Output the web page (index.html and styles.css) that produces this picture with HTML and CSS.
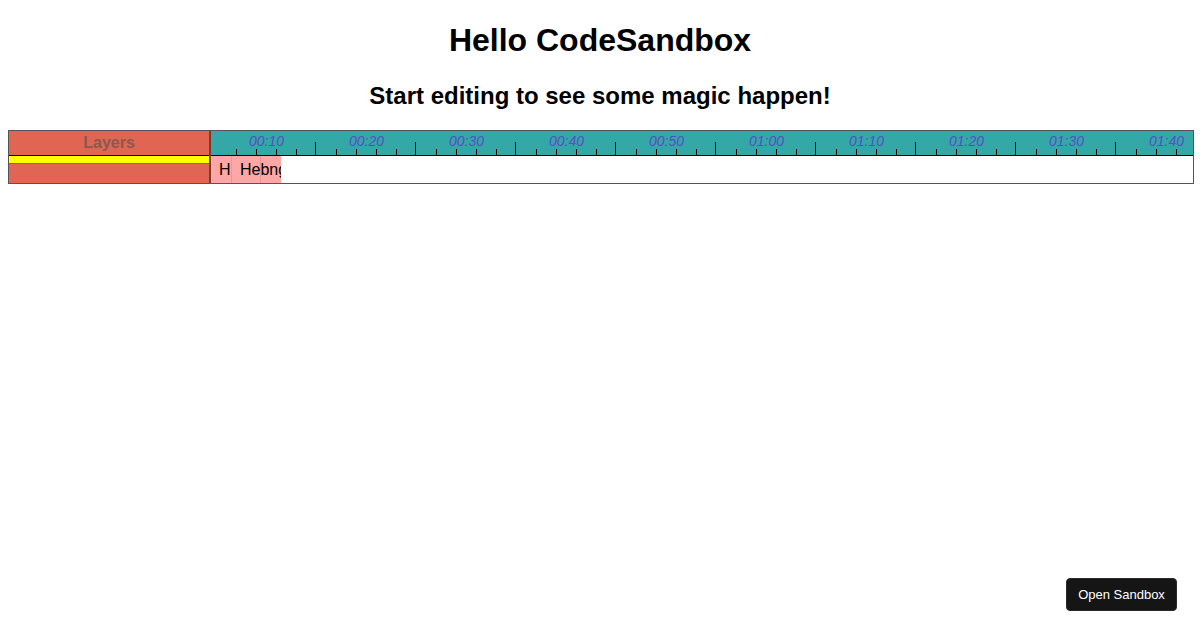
FILE: index.html
```html
<!DOCTYPE html>
<html>
<head>
<meta charset="utf-8">
<link rel="stylesheet" href="styles.css">
</head>
<body>
<div class="app">
  <h1>Hello CodeSandbox</h1>
  <h2>Start editing to see some magic happen!</h2>
  <div class="timeline">
    <div class="layers">
      <div class="layers-head">Layers</div>
      <div class="layer-bar"></div>
      <div class="layer-rest"></div>
    </div>
    <div class="tracks">
      <div class="ruler">
        <div class="seg"><span class="lbl">00:10</span><div class="ticks"><i class="major"></i><i></i><i></i><i></i><i></i></div></div>
        <div class="seg"><span class="lbl">00:20</span><div class="ticks"><i class="major"></i><i></i><i></i><i></i><i></i></div></div>
        <div class="seg"><span class="lbl">00:30</span><div class="ticks"><i class="major"></i><i></i><i></i><i></i><i></i></div></div>
        <div class="seg"><span class="lbl">00:40</span><div class="ticks"><i class="major"></i><i></i><i></i><i></i><i></i></div></div>
        <div class="seg"><span class="lbl">00:50</span><div class="ticks"><i class="major"></i><i></i><i></i><i></i><i></i></div></div>
        <div class="seg"><span class="lbl">01:00</span><div class="ticks"><i class="major"></i><i></i><i></i><i></i><i></i></div></div>
        <div class="seg"><span class="lbl">01:10</span><div class="ticks"><i class="major"></i><i></i><i></i><i></i><i></i></div></div>
        <div class="seg"><span class="lbl">01:20</span><div class="ticks"><i class="major"></i><i></i><i></i><i></i><i></i></div></div>
        <div class="seg"><span class="lbl">01:30</span><div class="ticks"><i class="major"></i><i></i><i></i><i></i><i></i></div></div>
        <div class="seg"><span class="lbl">01:40</span><div class="ticks"><i class="major"></i><i></i><i></i><i></i><i></i></div></div>
      </div>
      <div class="track">
        <div class="clips">
          <div class="clip c1">H</div>
          <div class="clip c2">Hebng</div>
          <div class="clip c3"></div>
        </div>
      </div>
    </div>
  </div>
</div>
<a class="open-btn">Open Sandbox</a>
</body>
</html>
```

FILE: styles.css
```css
*, *::before, *::after {
  box-sizing: content-box;
}
html, body {
  margin: 0;
  padding: 0;
  background: #fff;
}
body {
  font-family: "Liberation Sans", Arial, sans-serif;
  color: #000;
}
.app {
  text-align: center;
  padding: 22px 8px 0 8px;
}
h1 {
  font-size: 32px;
  font-weight: bold;
  margin: 0;
  line-height: 37px;
}
h2 {
  font-size: 24px;
  font-weight: bold;
  margin: 23px 0 0;
  line-height: 28px;
}
.timeline {
  margin-top: 20px;
  margin-right: -2px;
  border: 1px solid #555;
  display: flex;
  text-align: left;
  height: 52px;
}
.layers {
  width: 200px;
  flex: none;
  background: #e06653;
  border-right: 2px solid #7b3a2c;
  display: flex;
  flex-direction: column;
}
.layers-head {
  height: 24px;
  line-height: 24px;
  border-bottom: 1px solid #000;
  text-align: center;
  font-weight: bold;
  font-size: 16px;
  color: #875a4d;
}
.layer-bar {
  height: 7px;
  background: #ffff00;
  border-bottom: 1px solid #7d7a1a;
}
.layer-rest {
  flex: 1;
}
.tracks {
  flex: 1;
  min-width: 0;
  overflow: hidden;
  display: flex;
  flex-direction: column;
}
.ruler {
  height: 24px;
  background: #33a8a7;
  border-bottom: 1px solid #000;
  display: flex;
  padding-left: 4px;
  flex: none;
}
.seg {
  width: 100px;
  flex: none;
  display: grid;
}
.lbl, .ticks {
  grid-area: 1 / 1;
}
.lbl {
  align-self: start;
  text-align: center;
  padding-left: 3px;
  font-style: italic;
  font-size: 14px;
  line-height: 16px;
  margin-top: 2px;
  color: #5a4cc6;
}
.ticks {
  align-self: end;
  display: flex;
  align-items: flex-end;
  height: 13px;
}
.ticks i {
  display: block;
  width: 1px;
  height: 6px;
  background: #000;
  margin-left: 19px;
}
.ticks i.major {
  height: 13px;
  margin-left: 0;
}
.ticks i:nth-child(2) {
  margin-left: 20px;
}
.seg:first-child .major {
  visibility: hidden;
}
.track {
  flex: 1;
  display: flex;
  background: #fff;
}
.clips {
  display: flex;
  width: 70px;
  overflow: hidden;
}
.clip {
  flex: none;
  background: #ffa6a6;
  font-size: 16px;
  line-height: 27px;
  padding-left: 8px;
  white-space: nowrap;
  box-sizing: border-box;
  border-right: 1px solid #ee9494;
}
.c1 {
  width: 21px;
  padding-left: 8px;
}
.c2 {
  width: 29px;
  position: relative;
  z-index: 1;
}
.c3 {
  width: 20px;
  border-right: none;
  padding-left: 0;
}
.open-btn {
  position: fixed;
  right: 23px;
  bottom: 19px;
  width: 111px;
  height: 33px;
  box-sizing: border-box;
  background: #151515;
  border: 1px solid #2a2a2a;
  border-radius: 4px;
  color: #fff;
  font-family: "Liberation Sans", Arial, sans-serif;
  font-size: 13px;
  line-height: 31px;
  text-align: center;
}
```
